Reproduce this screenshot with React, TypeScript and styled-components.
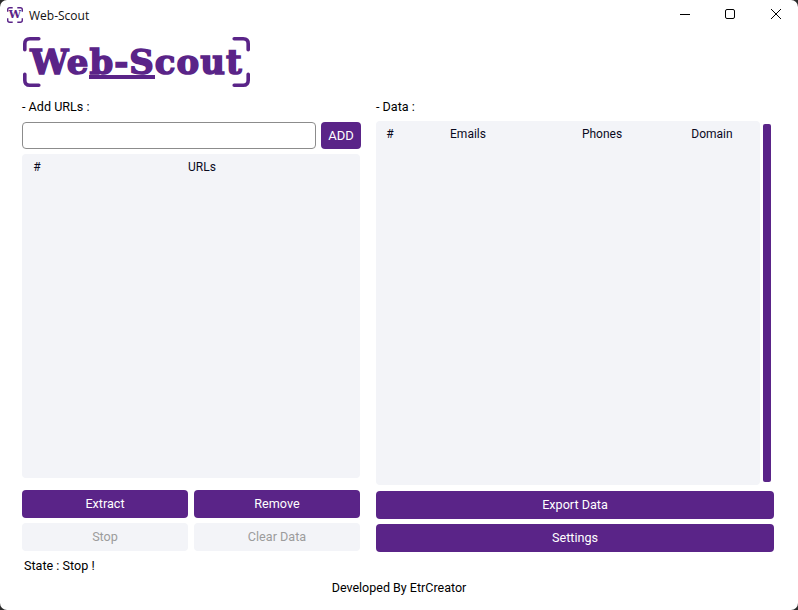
import React from 'react';
import styled, { createGlobalStyle } from 'styled-components';

const PURPLE = '#5a2488';
const PANEL = '#f3f4f8';

const GlobalStyle = createGlobalStyle`
    html, body {
        margin: 0;
        padding: 0;
        background: #2b2b2b;
    }
`;

const Window = styled.div`
    width: 798px;
    height: 610px;
    background: #fff;
    border-radius: 7px;
    overflow: hidden;
    font-family: Roboto, 'Liberation Sans', sans-serif;
    font-size: 13px;
    color: #000;
`;

const TitleBar = styled.div`
    height: 30px;
    display: flex;
    align-items: center;
    padding-left: 7px;
`;

const AppIcon = styled.div`
    position: relative;
    width: 16px;
    height: 16px;
    display: flex;
    align-items: center;
    justify-content: center;
    color: ${PURPLE};
    font-family: 'DejaVu Serif', serif;
    font-size: 11px;
    font-weight: 700;
    line-height: 16px;
`;

const TitleText = styled.span`
    margin-left: 6px;
    font-family: 'Open Sans', 'Noto Sans', sans-serif;
    font-size: 12px;
    color: #111;
`;

const WindowControls = styled.div`
    margin-left: auto;
    display: flex;
    align-items: flex-start;
    height: 100%;
`;

const ControlButton = styled.div<{ $width: number }>`
    width: ${(props) => props.$width}px;
    height: 28px;
    display: flex;
    align-items: center;
    justify-content: center;
`;

const Body = styled.div`
    padding: 7px 24px 0 22px;
`;

const LogoBox = styled.div`
    position: relative;
    width: 227px;
    height: 50px;
    margin-left: 1px;
    display: flex;
    align-items: center;
    justify-content: center;
`;

const LogoCorners = styled.svg`
    position: absolute;
    inset: 0;
`;

const LogoText = styled.span`
    font-family: 'DejaVu Serif', serif;
    font-size: 34px;
    font-weight: 700;
    letter-spacing: 1px;
    line-height: 34px;
    color: ${PURPLE};
    -webkit-text-stroke: 1.5px ${PURPLE};
`;

const LogoUnderlined = styled.span`
    display: inline-block;
    line-height: 26px;
    border-bottom: 4px solid ${PURPLE};
`;

const Columns = styled.div`
    display: grid;
    grid-template-columns: 338px 398px;
    column-gap: 16px;
    margin-top: 11px;
`;

const Column = styled.div`
    display: flex;
    flex-direction: column;
`;

const SectionLabel = styled.div<{ $gap: number }>`
    height: 18px;
    line-height: 18px;
    margin-bottom: ${(props) => props.$gap}px;
    font-size: 12.6px;
`;

const InputRow = styled.div`
    display: flex;
    gap: 5px;
    margin-right: -1px;
    margin-bottom: 5px;
`;

const UrlInput = styled.input`
    flex: 1;
    min-width: 0;
    height: 27px;
    box-sizing: border-box;
    border: 1px solid #8c8c8c;
    border-radius: 4px;
    background: #fff;
    outline: none;
`;

const AddButton = styled.button`
    width: 40px;
    height: 27px;
    padding: 0;
    border: 0;
    border-radius: 4px;
    background: ${PURPLE};
    color: #fff;
    font-family: inherit;
    font-size: 13px;
`;

const TablePanel = styled.div<{ $height: number }>`
    flex: 1 0 auto;
    height: ${(props) => props.$height}px;
    background: ${PANEL};
    border-radius: 4px;
    box-sizing: border-box;
`;

const TableHead = styled.div<{ $columns: string }>`
    display: grid;
    grid-template-columns: ${(props) => props.$columns};
    height: 25px;
    align-items: center;
    text-align: center;
    font-size: 12px;
    color: #0a0a1e;
`;

const DataRow = styled.div`
    display: flex;
    align-items: center;
`;

const ScrollThumb = styled.div`
    width: 8px;
    height: 358px;
    margin: 0 3px;
    border-radius: 2px;
    background: ${PURPLE};
`;

const ButtonGrid = styled.div`
    display: grid;
    grid-template-columns: 166px 166px;
    column-gap: 6px;
    row-gap: 5px;
    margin-top: 12px;
`;

const ButtonStack = styled.div`
    display: flex;
    flex-direction: column;
    gap: 5px;
    margin-top: 6px;
`;

const ActionButton = styled.button<{ $disabled?: boolean }>`
    height: 28px;
    padding: 0 0 2px;
    border: 0;
    border-radius: 4px;
    background: ${(props) => (props.$disabled ? PANEL : PURPLE)};
    color: ${(props) => (props.$disabled ? '#9c9c9c' : '#fff')};
    font-family: inherit;
    font-size: 12.6px;
`;

const StateText = styled.div`
    margin: 6px 0 0 2px;
    height: 17px;
    line-height: 17px;
    font-size: 12.6px;
`;

const Footer = styled.div`
    margin-top: 5px;
    margin-left: -22px;
    margin-right: -24px;
    height: 17px;
    line-height: 17px;
    text-align: center;
    font-size: 12.5px;
`;

const bracketPath = (w: number, h: number, r: number, lx: number, ly: number, sw: number) => {
    const a = sw / 2;
    return [
        `M${a} ${ly + a}V${r + a}Q${a} ${a} ${r + a} ${a}H${lx + a}`,
        `M${w - lx - a} ${a}H${w - r - a}Q${w - a} ${a} ${w - a} ${r + a}V${ly + a}`,
        `M${a} ${h - ly - a}V${h - r - a}Q${a} ${h - a} ${r + a} ${h - a}H${lx + a}`,
        `M${w - lx - a} ${h - a}H${w - r - a}Q${w - a} ${h - a} ${w - a} ${h - r - a}V${h - ly - a}`,
    ].join('');
};

export default function App(): JSX.Element {
    return (
        <Window>
            <GlobalStyle />
            <TitleBar>
                <AppIcon>
                    <LogoCorners width="16" height="16" fill="none" stroke={PURPLE} strokeWidth="1.4">
                        <path d={bracketPath(16, 16, 2, 5, 4, 1.4)} />
                    </LogoCorners>
                    W
                </AppIcon>
                <TitleText>Web-Scout</TitleText>
                <WindowControls>
                    <ControlButton $width={45}>
                        <svg width="10" height="10" viewBox="0 0 10 10">
                            <path d="M0 5.5H10" stroke="#000" strokeWidth="1" />
                        </svg>
                    </ControlButton>
                    <ControlButton $width={46}>
                        <svg width="10" height="10" viewBox="0 0 10 10" fill="none">
                            <rect x="0.5" y="0.5" width="9" height="9" rx="1.5" stroke="#000" />
                        </svg>
                    </ControlButton>
                    <ControlButton $width={45}>
                        <svg width="10" height="10" viewBox="0 0 10 10" fill="none">
                            <path d="M0 0L10 10M10 0L0 10" stroke="#000" strokeWidth="1" />
                        </svg>
                    </ControlButton>
                </WindowControls>
            </TitleBar>
            <Body>
                <LogoBox>
                    <LogoCorners width="227" height="50" fill="none" stroke={PURPLE} strokeWidth="3.6" strokeLinecap="round">
                        <path d={bracketPath(227, 50, 5, 14, 11, 3.6)} />
                    </LogoCorners>
                    <LogoText>
                        We<LogoUnderlined>b-S</LogoUnderlined>cout
                    </LogoText>
                </LogoBox>
                <Columns>
                    <Column>
                        <SectionLabel $gap={6}>- Add URLs :</SectionLabel>
                        <InputRow>
                            <UrlInput />
                            <AddButton>ADD</AddButton>
                        </InputRow>
                        <TablePanel $height={324}>
                            <TableHead $columns="30px 300px 8px">
                                <span>#</span>
                                <span>URLs</span>
                            </TableHead>
                        </TablePanel>
                        <ButtonGrid>
                            <ActionButton>Extract</ActionButton>
                            <ActionButton>Remove</ActionButton>
                            <ActionButton $disabled>Stop</ActionButton>
                            <ActionButton $disabled>Clear Data</ActionButton>
                        </ButtonGrid>
                        <StateText>State : Stop !</StateText>
                    </Column>
                    <Column>
                        <SectionLabel $gap={5}>- Data :</SectionLabel>
                        <DataRow>
                            <TablePanel $height={364}>
                                <TableHead $columns="28px 128px 140px 80px">
                                    <span>#</span>
                                    <span>Emails</span>
                                    <span>Phones</span>
                                    <span>Domain</span>
                                </TableHead>
                            </TablePanel>
                            <ScrollThumb />
                        </DataRow>
                        <ButtonStack>
                            <ActionButton>Export Data</ActionButton>
                            <ActionButton>Settings</ActionButton>
                        </ButtonStack>
                    </Column>
                </Columns>
                <Footer>Developed By EtrCreator</Footer>
            </Body>
        </Window>
    );
}
